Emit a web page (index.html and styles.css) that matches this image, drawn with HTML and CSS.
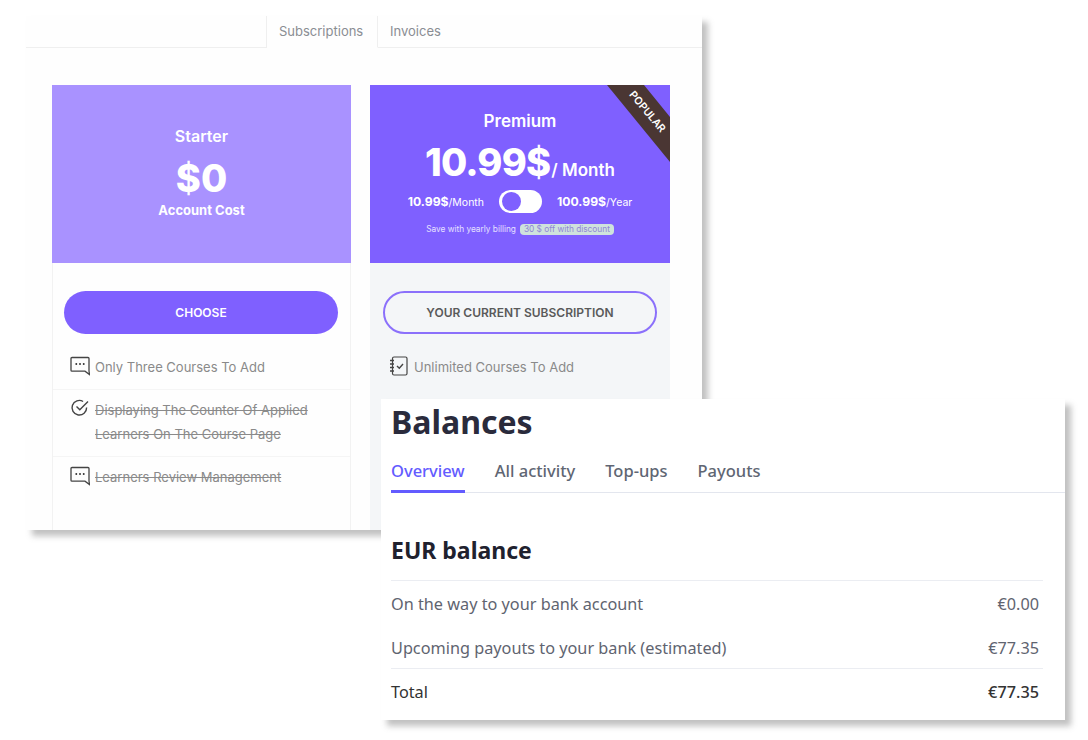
FILE: index.html
```html
<!DOCTYPE html>
<html lang="en">
<head>
<meta charset="utf-8">
<title>Subscriptions and Balances</title>
<link rel="stylesheet" href="styles.css">
</head>
<body>
<section class="window plans">
  <nav class="plan-tabs">
    <span class="tab-spacer"></span>
    <a class="plan-tab active">Subscriptions</a>
    <a class="plan-tab last">Invoices</a>
    <span class="tab-rest"></span>
  </nav>
  <div class="cards">
    <article class="card card-free">
      <header class="card-head starter">
        <h2 class="starter-name">Starter</h2>
        <div class="starter-price">$0</div>
        <div class="starter-note">Account Cost</div>
      </header>
      <div class="card-body">
        <button class="btn btn-solid">CHOOSE</button>
        <ul class="features">
          <li class="feature">
            <svg class="ico" viewBox="0 0 20 20" fill="none" stroke="#444" stroke-width="1.3"><path d="M2 1.500h16a1 1 0 0 1 1 1v12.500l.5 3.500-4.500-3.300H2a1 1 0 0 1-1-1V2.500a1 1 0 0 1 1-1z"/><path d="M5.500 8h1.600M9.200 8h1.600M12.900 8h1.600" stroke-width="1.800"/></svg>
            <span>Only Three Courses To Add</span>
          </li>
          <li class="feature">
            <svg class="ico ico-check" viewBox="0 0 20 20" fill="none" stroke="#444" stroke-width="1.400"><path d="M16.600 9.500a7.300 7.300 0 1 1-3.500-6"/><path d="M6.500 8.500l3.300 3.300L18 3.500"/></svg>
            <span class="off">Displaying The Counter Of Applied Learners On The Course Page</span>
          </li>
          <li class="feature">
            <svg class="ico" viewBox="0 0 20 20" fill="none" stroke="#444" stroke-width="1.3"><path d="M2 1.500h16a1 1 0 0 1 1 1v12.500l.5 3.500-4.500-3.300H2a1 1 0 0 1-1-1V2.500a1 1 0 0 1 1-1z"/><path d="M5.500 8h1.600M9.200 8h1.600M12.900 8h1.600" stroke-width="1.800"/></svg>
            <span class="off">Learners Review Management</span>
          </li>
        </ul>
      </div>
    </article>
    <article class="card card-current">
      <header class="card-head premium">
        <svg class="ribbon" viewBox="0 0 63 77"><polygon points="0,0 37,0 63,32 63,77" fill="#4a3633"/></svg>
        <span class="ribbon-text">POPULAR</span>
        <h2 class="premium-name">Premium</h2>
        <div class="premium-price"><b>10.99$</b><span>/ Month</span></div>
        <div class="billing">
          <span class="bill"><b>10.99$</b>/Month</span>
          <span class="toggle"><i class="knob"></i></span>
          <span class="bill"><b>100.99$</b>/Year</span>
        </div>
        <div class="save"><span>Save with yearly billing</span><span class="pill">30 $ off with discount</span></div>
      </header>
      <div class="card-body">
        <button class="btn btn-outline">YOUR CURRENT SUBSCRIPTION</button>
        <ul class="features">
          <li class="feature">
            <svg class="ico" viewBox="0 0 20 20" fill="none" stroke="#444" stroke-width="1.200"><rect x="3.500" y="1" width="14.500" height="18" rx="1.500"/><path d="M1 4.500h4M1 8h4M1 11.500h4M1 15h4" stroke-width="1.300"/><path d="M8 10l2.300 2.300L14 8" stroke-width="1.400"/></svg>
            <span>Unlimited Courses To Add</span>
          </li>
        </ul>
      </div>
    </article>
  </div>
</section>

<section class="window balances">
  <h1 class="bal-title">Balances</h1>
  <nav class="bal-tabs">
    <a class="bal-tab active">Overview</a>
    <a class="bal-tab">All activity</a>
    <a class="bal-tab">Top-ups</a>
    <a class="bal-tab">Payouts</a>
  </nav>
  <h2 class="bal-sub">EUR balance</h2>
  <div class="rows">
    <div class="row"><span>On the way to your bank account</span><span>€0.00</span></div>
    <div class="row"><span>Upcoming payouts to your bank (estimated)</span><span>€77.35</span></div>
    <div class="row row-total"><span>Total</span><b>€77.35</b></div>
  </div>
</section>
</body>
</html>
```
FILE: styles.css
```css
* { box-sizing: border-box; }
html, body { margin: 0; padding: 0; }
body { position: relative; width: 1088px; height: 740px; background: #fff; overflow: hidden; font-family: "Inter", "Liberation Sans", sans-serif; }
h1, h2, ul { margin: 0; padding: 0; }
ul { list-style: none; }

.window { position: absolute; background: #fefefe; box-shadow: 6px 6px 6px rgba(100, 100, 100, .4); }
.plans { left: 26px; top: 16px; width: 676px; height: 514px; overflow: hidden; }
.balances { left: 381px; top: 399px; width: 684px; height: 321px; background: #fff; padding-left: 10px; font-family: "Noto Sans", "Open Sans", sans-serif; }

.plan-tabs { display: flex; height: 32px; }
.tab-spacer { width: 241px; border-bottom: 1px solid #efefef; border-right: 1px solid #efefef; }
.tab-rest { flex: 1; border-bottom: 1px solid #efefef; }
.plan-tab { font-size: 13px; line-height: 31px; color: #8a8d93; padding: 0 13px; border-bottom: 1px solid #efefef; border-right: 1px solid #efefef; }
.plan-tab.active { width: 111px; padding-left: 12px; border-bottom-color: transparent; white-space: nowrap; }
.plan-tab.last { border-right: 0; padding-left: 12px; }

.cards { display: flex; gap: 19px; padding: 37px 0 0 26px; }
.card { width: 300px; height: 445px; display: flex; flex-direction: column; }
.card-free { width: 299px; }
.card-head { height: 178px; flex: none; color: #fff; display: flex; flex-direction: column; align-items: center; position: relative; }
.starter { background: #a992ff; padding-top: 41px; }
.premium { background: #7f60ff; padding-top: 26px; overflow: hidden; }

.starter-name { font-size: 16px; line-height: 20px; font-weight: 600; }
.starter-price { font-size: 38px; line-height: 46px; font-weight: 800; margin-top: 9px; }
.starter-note { font-size: 13px; line-height: 16px; font-weight: 700; margin-top: 1px; }

.ribbon { position: absolute; right: 0; top: 0; width: 63px; height: 77px; }
.ribbon-text { position: absolute; left: 239px; top: 21px; width: 76px; text-align: center; font-size: 10.500px; line-height: 12px; font-weight: 600; color: #fff; transform: rotate(50deg); }

.premium-name { font-size: 17px; line-height: 20px; font-weight: 600; }
.premium-price { display: flex; align-items: baseline; gap: 1px; margin-top: 10px; }
.premium-price b { font-size: 38px; line-height: 42px; font-weight: 800; letter-spacing: -.8px; }
.premium-price span { font-size: 17px; font-weight: 600; }
.billing { display: flex; align-items: center; gap: 15px; margin-top: 6px; height: 24px; font-size: 10.500px; }
.bill b { font-size: 12.200px; font-weight: 700; }
.toggle { width: 43px; height: 23px; border-radius: 12px; background: #fff; padding: 2px 3px; display: block; }
.knob { display: block; width: 19px; height: 19px; border-radius: 50%; background: #7f60ff; }
.save { display: flex; align-items: center; gap: 4px; margin-top: 11px; font-size: 8.300px; line-height: 11px; color: #e6e0ff; }
.pill { background: #cfe3dc; color: #8f86d6; border-radius: 4px; padding: 0 4px; white-space: nowrap; }

.card-body { flex: 1; padding: 28px 12px 0 11px; border-left: 1px solid #f2f2f2; border-right: 1px solid #f2f2f2; }
.card-current .card-body { background: #f4f6f8; border: 0; padding: 28px 13px 0; }
.btn { display: block; width: 274px; height: 43px; border-radius: 22px; font-family: inherit; font-size: 12px; font-weight: 600; }
.btn-solid { background: #7f60ff; border: 0; color: #fff; }
.btn-outline { background: transparent; border: 2px solid #8b70fb; color: #5a5a5a; }

.features { margin: 10px -12px 0 -11px; }
.card-current .features { margin: 10px -13px 0; }
.feature { display: flex; align-items: flex-start; gap: 5px; padding: 8px 22px 10px 17px; border-top: 1px solid #f5f5f5; font-size: 13px; line-height: 24px; color: #8a8a8a; }
.feature:first-child { border-top: 0; padding-top: 11px; }
.card-current .feature { padding-left: 19px; }
.ico { width: 20px; height: 20px; flex: none; margin-top: 1px; }
.ico-check { margin-top: 0; }
.off { text-decoration: line-through; }

.bal-title { font-size: 32px; line-height: 46px; font-weight: 700; color: #2a2b3c; }
.bal-tabs { display: flex; gap: 30px; margin-top: 1px; height: 47px; border-bottom: 1px solid #e3e6ee; }
.bal-tab { font-size: 16.500px; line-height: 50px; font-weight: 500; color: #606673; height: 47px; white-space: nowrap; }
.bal-tab.active { color: #635bff; border-bottom: 3px solid #635bff; }
.bal-sub { font-size: 23px; line-height: 30px; font-weight: 700; color: #20212e; margin-top: 42px; }
.rows { margin-top: 15px; margin-right: 22px; border-top: 1px solid #ebedf2; }
.row { display: flex; justify-content: space-between; height: 44px; padding: 2px 4px 0 0; align-items: center; font-size: 16.250px; color: #5f6470; }
.row-total { margin-top: -1px; padding-top: 0; border-top: 1px solid #ebedf2; color: #333; height: 47px; }
.row-total b { font-weight: 500; }
```
